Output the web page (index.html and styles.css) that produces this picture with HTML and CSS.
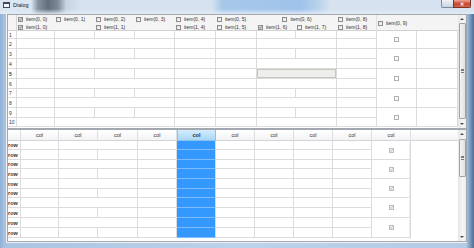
FILE: index.html
```html
<!DOCTYPE html>
<html>
<head>
<meta charset="utf-8">
<link rel="stylesheet" href="styles.css">
</head>
<body>
<div class="window">
  <div class="titlebar">
    <span class="ticon"></span><span class="title">Dialog</span>
    <span class="help"></span><span class="close">✕</span>
  </div>
  <div class="client">
    <div class="tbl top">
      <div class="view">
        <div class="thead">
          <div class="corner"></div>
          <div class="hi"><span class="cb"><svg viewBox="0 0 3 3"><path d="M0.3 1.5 L1.2 2.4 L2.7 0.4" fill="none" stroke="#2a2a2a" stroke-width="0.7"/></svg></span>item(0, 0)</div>
          <div class="hi"><span class="cb"></span>item(0, 1)</div>
          <div class="hi"><span class="cb"></span>item(0, 2)</div>
          <div class="hi"><span class="cb"></span>item(0, 3)</div>
          <div class="hi"><span class="cb"></span>item(0, 4)</div>
          <div class="hi"><span class="cb"></span>item(0, 5)</div>
          <div class="hi s2 ctr"><span class="cb"></span>item(0, 6)</div>
          <div class="hi"><span class="cb"></span>item(0, 8)</div>
          <div class="hi v sep"><span class="cb"></span>item(0, 9)</div>
          <div class="v"></div>
          <div class="hi"><span class="cb"><svg viewBox="0 0 3 3"><path d="M0.3 1.5 L1.2 2.4 L2.7 0.4" fill="none" stroke="#2a2a2a" stroke-width="0.7"/></svg></span>item(1, 0)</div>
          <div></div>
          <div class="hi"><span class="cb"></span>item(1, 1)</div>
          <div></div>
          <div class="hi"><span class="cb"></span>item(1, 4)</div>
          <div class="hi"><span class="cb"></span>item(1, 5)</div>
          <div class="hi"><span class="cb"><svg viewBox="0 0 3 3"><path d="M0.3 1.5 L1.2 2.4 L2.7 0.4" fill="none" stroke="#2a2a2a" stroke-width="0.7"/></svg></span>item(1, 6)</div>
          <div class="hi"><span class="cb"></span>item(1, 7)</div>
          <div class="hi"><span class="cb"></span>item(1, 8)</div>
        </div>
        <div class="tbody">
          <div class="rh">1</div><div></div><div></div><div></div><div></div><div></div><div></div><div></div><div></div><div></div><div class="v ck"><span class="cb lt"></span></div><div class="v"></div>
          <div class="rh">2</div><div></div><div class="s3"></div><div></div><div></div><div class="s2"></div><div></div>
          <div class="rh">3</div><div></div><div></div><div></div><div></div><div></div><div></div><div></div><div></div><div></div><div class="v ck"><span class="cb lt"></span></div><div class="v"></div>
          <div class="rh">4</div><div></div><div class="s3"></div><div></div><div></div><div class="s2"></div><div></div>
          <div class="rh bold">5</div><div></div><div></div><div></div><div></div><div></div><div></div><div class="s2 cur"></div><div></div><div class="v ck"><span class="cb lt"></span></div><div class="v"></div>
          <div class="rh">6</div><div></div><div class="s3"></div><div></div><div></div><div class="s2"></div><div></div>
          <div class="rh">7</div><div></div><div></div><div></div><div></div><div></div><div></div><div></div><div></div><div></div><div class="v ck"><span class="cb lt"></span></div><div class="v"></div>
          <div class="rh">8</div><div></div><div class="s3"></div><div></div><div></div><div class="s2"></div><div></div>
          <div class="rh">9</div><div></div><div></div><div></div><div></div><div></div><div></div><div></div><div></div><div></div><div class="v ck"><span class="cb lt"></span></div><div class="v"></div>
          <div class="rh">10</div><div></div><div class="s3"></div><div></div><div></div><div class="s2"></div><div></div>
        </div>
      </div>
      <div class="vs">
        <span class="arrow up"></span>
        <span class="thumb full"><span class="grip"></span></span>
        <span class="arrow down"></span>
      </div>
    </div>
    <div class="tbl bottom">
      <div class="view">
        <div class="bhead">
          <div></div>
          <div>col</div><div>col</div><div>col</div><div>col</div>
          <div class="sel">col</div>
          <div>col</div><div>col</div><div>col</div><div>col</div><div>col</div>
          <div class="fill"></div>
        </div>
        <div class="bbody">
          <div class="bgrid">
            <div class="rh">row</div><div></div><div class="s2"></div><div></div><div class="blue"></div><div></div><div></div><div></div><div></div><div class="v ck"><span class="cb dis"><svg viewBox="0 0 3 3"><path d="M0.3 1.5 L1.2 2.4 L2.7 0.4" fill="none" stroke="#a6a6a6" stroke-width="0.7"/></svg></span></div>
            <div class="rh">row</div><div></div><div></div><div></div><div></div><div class="blue"></div><div></div><div></div><div></div><div></div>
            <div class="rh">row</div><div></div><div class="s2"></div><div></div><div class="blue"></div><div></div><div></div><div></div><div></div><div class="v ck"><span class="cb dis"><svg viewBox="0 0 3 3"><path d="M0.3 1.5 L1.2 2.4 L2.7 0.4" fill="none" stroke="#a6a6a6" stroke-width="0.7"/></svg></span></div>
            <div class="rh">row</div><div></div><div></div><div></div><div></div><div class="blue"></div><div></div><div></div><div></div><div></div>
            <div class="rh">row</div><div></div><div class="s2"></div><div></div><div class="blue"></div><div></div><div></div><div></div><div></div><div class="v ck"><span class="cb dis"><svg viewBox="0 0 3 3"><path d="M0.3 1.5 L1.2 2.4 L2.7 0.4" fill="none" stroke="#a6a6a6" stroke-width="0.7"/></svg></span></div>
            <div class="rh">row</div><div></div><div></div><div></div><div></div><div class="blue"></div><div></div><div></div><div></div><div></div>
            <div class="rh">row</div><div></div><div class="s2"></div><div></div><div class="blue"></div><div></div><div></div><div></div><div></div><div class="v ck"><span class="cb dis"><svg viewBox="0 0 3 3"><path d="M0.3 1.5 L1.2 2.4 L2.7 0.4" fill="none" stroke="#a6a6a6" stroke-width="0.7"/></svg></span></div>
            <div class="rh">row</div><div></div><div></div><div></div><div></div><div class="blue"></div><div></div><div></div><div></div><div></div>
            <div class="rh">row</div><div></div><div class="s2"></div><div></div><div class="blue"></div><div></div><div></div><div></div><div></div><div class="v ck"><span class="cb dis"><svg viewBox="0 0 3 3"><path d="M0.3 1.5 L1.2 2.4 L2.7 0.4" fill="none" stroke="#a6a6a6" stroke-width="0.7"/></svg></span></div>
            <div class="rh">row</div><div></div><div></div><div></div><div></div><div class="blue"></div><div></div><div></div><div></div><div></div>
          </div>
          <div class="bfill"></div>
        </div>
      </div>
      <div class="vs">
        <span class="arrow up"></span>
        <span class="thumb short"><span class="grip"></span></span>
        <span class="spacer"></span>
        <span class="arrow down"></span>
      </div>
    </div>
  </div>
</div>
</body>
</html>
```
FILE: styles.css
```css
* { box-sizing: border-box; }

body {
  margin: 0;
  width: 474px;
  height: 248px;
  overflow: hidden;
  font-family: "Liberation Sans", Arial, sans-serif;
  color: #2b2b2b;
  background: linear-gradient(90deg, #8fb0d6 0, #a9c4e2 5px, #bcd2ea 50%, #b3cbe5 466px, #6f8fb5 471px, #4e6d93 474px);
}

.window {
  display: flex;
  flex-direction: column;
  height: 248px;
}

.titlebar {
  height: 14px;
  flex: none;
  display: flex;
  align-items: flex-start;
  background:
    linear-gradient(180deg, rgba(255,255,255,0) 0, rgba(255,255,255,0) 9px, rgba(226,235,245,0.9) 14px),
    linear-gradient(90deg, #dbe6f2 0, #dbe6f2 31px, #8593a2 38px, #616f7c 48px, #7d8a97 58px, #c5d3e2 66px, #d6e2ef 80px, #d6e2ef 212px, #a8c8ea 222px, #9ec2ea 300px, #b9d2ec 318px, #d6e2ef 330px, #d6e2ef 100%);
}

.ticon {
  width: 7px;
  height: 6px;
  margin: 2px 3px 0 3px;
  border: 1px solid #3d4c5c;
  border-top-width: 2px;
  background: #f4f7fb;
}

.title {
  font-size: 5.5px;
  margin-top: 2px;
  color: #1a1a1a;
}

.help {
  margin-left: auto;
  width: 12px;
  height: 8px;
  background: linear-gradient(#eef2f7, #c7d3e0);
  border: 1px solid #7b8ba0;
  border-top: none;
  border-right: none;
  border-radius: 0 0 0 2px;
}

.close {
  width: 18px;
  height: 8px;
  margin-right: 3px;
  background: linear-gradient(#eaa593, #c8432e 55%, #d5674d);
  border: 1px solid #7c3225;
  border-top: none;
  border-radius: 0 0 2px 0;
  color: #fff;
  font-size: 5px;
  font-weight: bold;
  display: flex;
  align-items: center;
  justify-content: center;
}

.client {
  flex: 1;
  margin: 0 7px 5px 6px;
  padding: 0 0 1px 1px;
  background: #f0f0f0;
  display: flex;
  flex-direction: column;
}

.tbl {
  width: 460px;
  display: flex;
  border: 1px solid #a3a8b0;
  background: #fff;
}

.top { height: 115px; }
.bottom { height: 113px; }

.view {
  width: 450px;
  display: flex;
  flex-direction: column;
}

/* ---------- top table ---------- */
.thead {
  height: 16px;
  flex: none;
  display: grid;
  grid-template-columns: 9px 38px 40px 40px 40px 41px 41px 39px 41px 40px 40px 41px;
  grid-template-rows: 8px 8px;
  background: #f4f4f4;
  border-bottom: 1px solid #d2d2d2;
}

.corner {
  grid-row: span 2;
  border-right: 1px solid #d8d8d8;
}

.hi {
  display: flex;
  align-items: center;
  gap: 3px;
  padding-left: 1px;
  font-size: 5px;
  white-space: nowrap;
  color: #333;
}

.ctr { justify-content: center; padding-left: 0; }
.sep { border-left: 1px solid #e0e0e0; margin-left: -1px; }

.tbody {
  display: grid;
  grid-template-columns: 9px 38px 40px 40px 40px 41px 41px 39px 41px 40px 40px 41px;
  grid-template-rows: 8px 10px 10px 10px 10px 10px 9px 10px 10px 9px;
}

.tbody > div,
.bgrid > div {
  border-right: 1px solid #dcdcdc;
  border-bottom: 1px solid #dcdcdc;
}

.s2 { grid-column: span 2; }
.s3 { grid-column: span 3; }
.v { grid-row: span 2; }

.rh {
  display: flex;
  align-items: center;
  padding-left: 1px;
  font-size: 5px;
  color: #333;
  background: #fff;
}

.bold { font-weight: bold; }

.cur {
  background: #eeeeec;
  box-shadow: inset 0 0 0 1px #c9c6c0;
}

.ck {
  display: flex;
  align-items: center;
  justify-content: center;
}

/* checkboxes */
.cb {
  width: 5px;
  height: 5px;
  flex: none;
  border: 1px solid #8c8c8c;
  background: linear-gradient(135deg, #dedede, #fbfbfb);
  display: inline-flex;
}

.cb svg { width: 100%; height: 100%; display: block; }

.cb.lt { border-color: #b0b0b0; background: #fafafa; }
.cb.dis { border-color: #bdbdbd; background: #f3f3f3; }

/* ---------- bottom table ---------- */
.bhead {
  height: 11px;
  flex: none;
  display: grid;
  grid-template-columns: 13px 38px 39px 40px 39px 39px 39px 39px 39px 39px 39px 47px;
  background: linear-gradient(#ffffff, #f1f2f4);
}

.bhead > div {
  border-right: 1px solid #dcdfe3;
  border-bottom: 1px solid #d5d5d5;
  font-size: 5.5px;
  color: #333;
  display: flex;
  align-items: center;
  justify-content: center;
}

.bhead > .fill { border-right: none; }

.bhead > .sel {
  background: linear-gradient(#d3ecfc, #a9d7f6);
  border: 1px solid #8cc2e8;
  border-top: none;
  font-weight: bold;
  color: #1c2a36;
}

.bbody {
  display: flex;
}

.bgrid {
  width: 403px;
  display: grid;
  grid-template-columns: 13px 38px 39px 40px 39px 39px 39px 39px 39px 39px 39px;
  grid-template-rows: 9px 10px 9px 10px 10px 9px 10px 10px 10px 10px;
}

.bgrid > .rh {
  font-size: 5.5px;
  font-weight: bold;
  padding-left: 0;
}

.bgrid > .blue {
  background: #3399ff;
  border-bottom-color: #7fbcff;
}

.bgrid > .ck {
  box-shadow: inset 1px 1px 0 #fff, inset -1px 0 0 #ececec;
}

.bfill {
  flex: 1;
  background: #fff;
}

/* ---------- scrollbars ---------- */
.vs {
  width: 8px;
  display: flex;
  flex-direction: column;
  align-items: center;
  background: linear-gradient(90deg, #e6e6e6, #f5f5f5 60%, #ececec);
}

.arrow {
  width: 8px;
  height: 8px;
  flex: none;
  display: flex;
  align-items: center;
  justify-content: center;
}

.arrow::after {
  content: "";
  border-left: 2px solid transparent;
  border-right: 2px solid transparent;
}

.up::after { border-bottom: 2px solid #4d4d4d; }
.down::after { border-top: 2px solid #4d4d4d; }

.thumb {
  width: 7px;
  border: 1px solid #a3a3a3;
  border-radius: 1px;
  background: linear-gradient(90deg, #f4f4f4, #e0e0e0);
  display: flex;
  align-items: center;
  justify-content: center;
}

.thumb.full { flex: 1; margin: 0 0 1px; }
.thumb.short { height: 38px; flex: none; margin-top: 1px; }

.grip {
  width: 3px;
  height: 4px;
  background: repeating-linear-gradient(180deg, #7a7a7a 0, #7a7a7a 1px, transparent 1px, transparent 1.5px);
}

.spacer { flex: 1; }
```
